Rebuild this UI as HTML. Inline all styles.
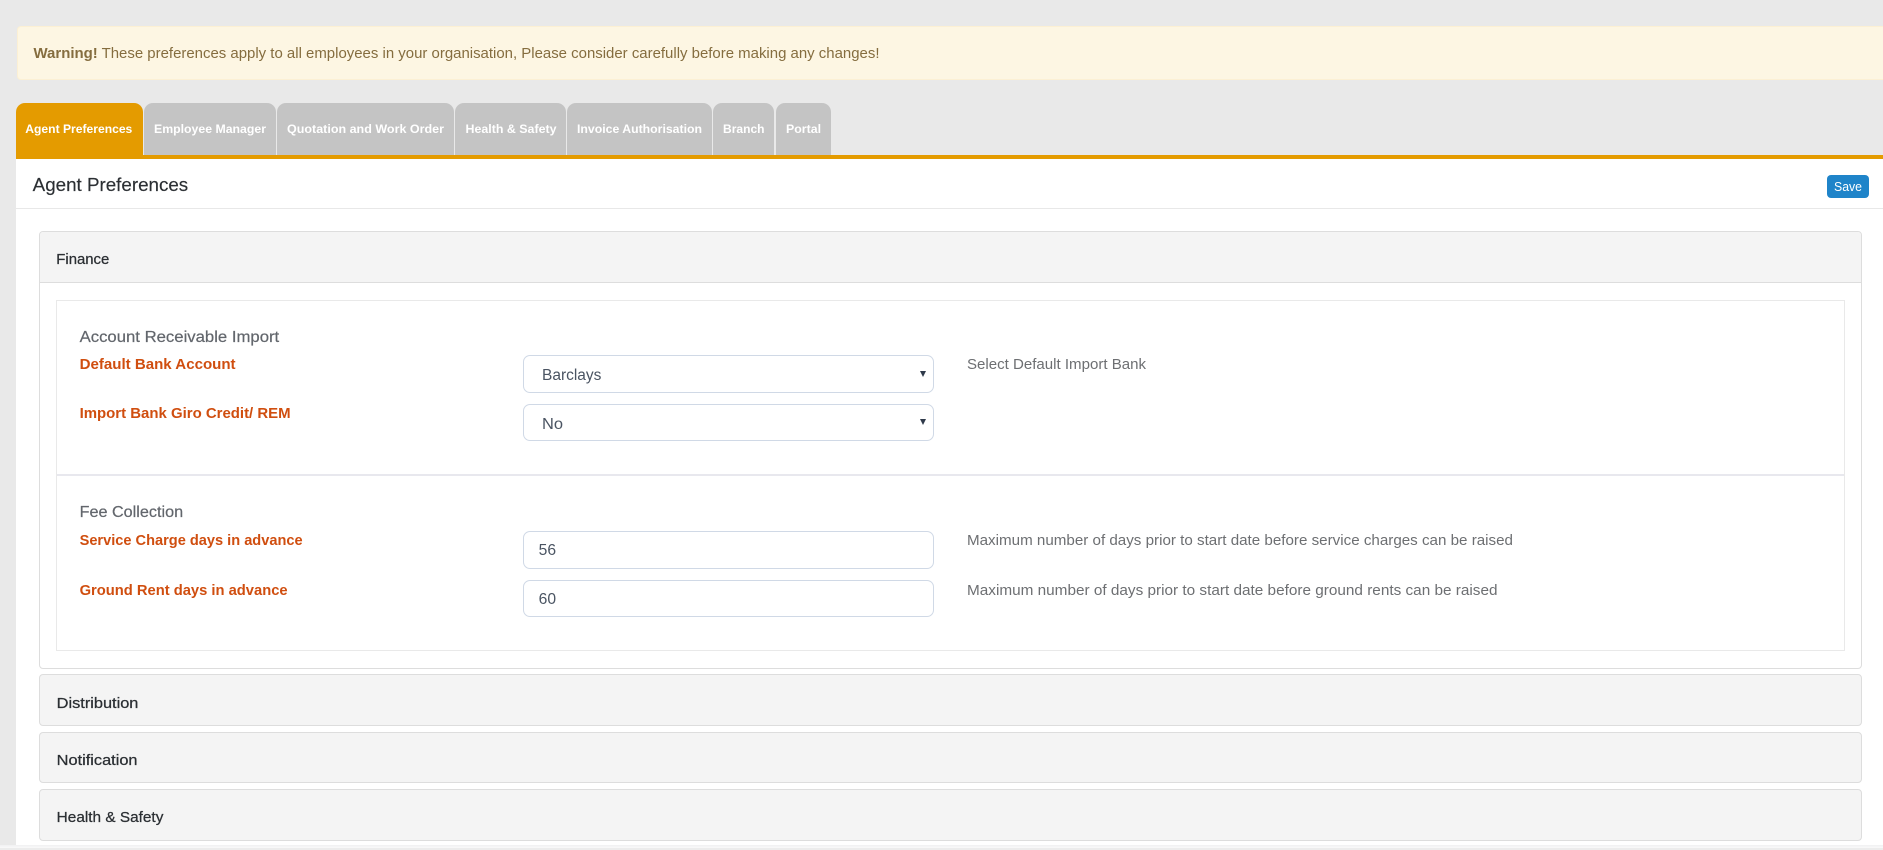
<!DOCTYPE html>
<html lang="en"><head><meta charset="utf-8"><title>Agent Preferences</title>
<style>
html,body{margin:0;padding:0;width:1883px;height:850px;overflow:hidden;background:#e9e9e9}
.b{position:absolute;box-sizing:border-box}
.tab{top:103px;height:52px;background:#c4c4c4;border-radius:9px 9px 0 0}
.panel{left:39px;width:1823px;background:#f4f4f4;border:1px solid #dddddd;border-radius:4px}
.field{left:523px;width:411px;background:#fff;border:1px solid #d0d9e6;border-radius:7px}
.arrow{left:919.5px;width:0;height:0;border-left:3.5px solid transparent;border-right:3.5px solid transparent;border-top:6px solid #2f3a4a}
svg{position:absolute;left:0;top:0}
text{font-family:"Liberation Sans",Arial,sans-serif}
.tt{font-size:11.5px;font-weight:700;fill:#fff}
.lb{font-size:14.4px;font-weight:700;fill:#d04e0f}
.hd{font-size:15.4px;fill:#62666c;stroke:#62666c;stroke-width:.2px}
.hp{font-size:14.4px;fill:#6d6f72}
.vl{font-size:15.4px;fill:#4a5462}
.ph{font-size:14.4px;fill:#2b2f33;stroke:#2b2f33;stroke-width:.25px}
</style></head>
<body>
<div class="b" style="left:17px;top:26px;width:1866px;height:54px;background:#fdf6e3;border:1px solid #fcf0d4;border-right:0;border-radius:4px 0 0 4px"></div>

<div class="b tab" style="left:16px;width:127px;background:#e49b00"></div>
<div class="b tab" style="left:144px;width:132px"></div>
<div class="b tab" style="left:277px;width:177px"></div>
<div class="b tab" style="left:455px;width:111px"></div>
<div class="b tab" style="left:567px;width:145px"></div>
<div class="b tab" style="left:713px;width:61px"></div>
<div class="b tab" style="left:776px;width:55px"></div>

<div class="b" style="left:16px;top:155px;width:1867px;height:4px;background:#e49b00"></div>
<div class="b" style="left:16px;top:159px;width:1867px;height:687px;background:#fff"></div>
<div class="b" style="left:16px;top:208px;width:1867px;height:1px;background:#e8e8e8"></div>
<div class="b" style="left:1827px;top:175px;width:42px;height:23px;background:#1f84c9;border-radius:4px"></div>

<div class="b" style="left:39px;top:231px;width:1823px;height:438px;background:#fff;border:1px solid #dddddd;border-radius:4px"></div>
<div class="b" style="left:40px;top:232px;width:1821px;height:51px;background:#f4f4f4;border-bottom:1px solid #dddddd;border-radius:3px 3px 0 0"></div>
<div class="b" style="left:56px;top:300px;width:1789px;height:351px;background:#fff;border:1px solid #e9e9e9"></div>
<div class="b" style="left:57px;top:474px;width:1787px;height:2px;background:#e8e8ee"></div>

<div class="b field" style="top:355px;height:38px"></div>
<div class="b arrow" style="top:371px"></div>
<div class="b field" style="top:404px;height:37px"></div>
<div class="b arrow" style="top:419px"></div>
<div class="b field" style="top:531px;height:38px"></div>
<div class="b field" style="top:580px;height:37px"></div>

<div class="b panel" style="top:674px;height:52px"></div>
<div class="b panel" style="top:732px;height:51px"></div>
<div class="b panel" style="top:789px;height:52px"></div>

<div class="b" style="left:0;top:845px;width:1883px;height:3px;background:linear-gradient(#f0f0f2,#fafafa)"></div>
<div class="b" style="left:0;top:848px;width:1883px;height:2px;background:#ececec"></div>

<svg width="1883" height="850" xmlns="http://www.w3.org/2000/svg">
<text x="33.5" y="58" font-size="14.4" fill="#856d3f" textLength="846" lengthAdjust="spacingAndGlyphs"><tspan font-weight="700">Warning!</tspan> These preferences apply to all employees in your organisation, Please consider carefully before making any changes!</text>

<text class="tt" x="25.3" y="133" textLength="107" lengthAdjust="spacingAndGlyphs">Agent Preferences</text>
<text class="tt" x="154" y="133" textLength="112" lengthAdjust="spacingAndGlyphs">Employee Manager</text>
<text class="tt" x="287" y="133" textLength="157" lengthAdjust="spacingAndGlyphs">Quotation and Work Order</text>
<text class="tt" x="465.5" y="133" textLength="91" lengthAdjust="spacingAndGlyphs">Health &amp; Safety</text>
<text class="tt" x="577" y="133" textLength="125" lengthAdjust="spacingAndGlyphs">Invoice Authorisation</text>
<text class="tt" x="723" y="133" textLength="41.5" lengthAdjust="spacingAndGlyphs">Branch</text>
<text class="tt" x="786" y="133" textLength="35" lengthAdjust="spacingAndGlyphs">Portal</text>

<text x="32.7" y="191" font-size="18.4" fill="#2b2f33" stroke="#2b2f33" stroke-width=".15" textLength="155.5" lengthAdjust="spacingAndGlyphs">Agent Preferences</text>
<text x="1834" y="191" font-size="13" fill="#fff" textLength="28" lengthAdjust="spacingAndGlyphs">Save</text>
<text class="ph" x="56.3" y="264" textLength="53" lengthAdjust="spacingAndGlyphs">Finance</text>

<text class="hd" x="79.6" y="342" textLength="199.6" lengthAdjust="spacingAndGlyphs">Account Receivable Import</text>
<text class="lb" x="79.6" y="369" textLength="156" lengthAdjust="spacingAndGlyphs">Default Bank Account</text>
<text class="vl" x="542" y="380" textLength="59.4" lengthAdjust="spacingAndGlyphs">Barclays</text>
<text class="hp" x="967" y="369" textLength="179" lengthAdjust="spacingAndGlyphs">Select Default Import Bank</text>
<text class="lb" x="79.6" y="418" textLength="211" lengthAdjust="spacingAndGlyphs">Import Bank Giro Credit/ REM</text>
<text class="vl" x="542" y="429" textLength="21" lengthAdjust="spacingAndGlyphs">No</text>

<text class="hd" x="79.6" y="517" textLength="103.5" lengthAdjust="spacingAndGlyphs">Fee Collection</text>
<text class="lb" x="79.6" y="545" textLength="223" lengthAdjust="spacingAndGlyphs">Service Charge days in advance</text>
<text class="vl" x="538.7" y="555" textLength="17.4" lengthAdjust="spacingAndGlyphs">56</text>
<text class="hp" x="967" y="545" textLength="546" lengthAdjust="spacingAndGlyphs">Maximum number of days prior to start date before service charges can be raised</text>
<text class="lb" x="79.6" y="595" textLength="208" lengthAdjust="spacingAndGlyphs">Ground Rent days in advance</text>
<text class="vl" x="538.7" y="604" textLength="17.4" lengthAdjust="spacingAndGlyphs">60</text>
<text class="hp" x="967" y="595" textLength="530.5" lengthAdjust="spacingAndGlyphs">Maximum number of days prior to start date before ground rents can be raised</text>

<text class="ph" x="56.7" y="708" textLength="81.7" lengthAdjust="spacingAndGlyphs">Distribution</text>
<text class="ph" x="56.7" y="765" textLength="80.8" lengthAdjust="spacingAndGlyphs">Notification</text>
<text class="ph" x="56.7" y="822" textLength="106.7" lengthAdjust="spacingAndGlyphs">Health &amp; Safety</text>
</svg>
</body></html>
